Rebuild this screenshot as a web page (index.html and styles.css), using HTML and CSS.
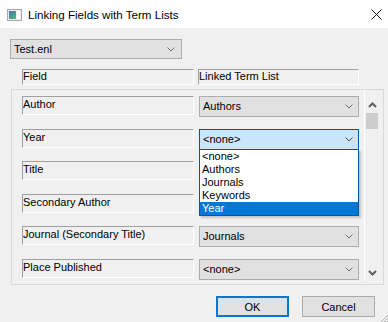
FILE: index.html
```html
<!DOCTYPE html>
<html lang="en">

<head>
  <meta charset="UTF-8">
  <meta name="viewport" content="width=device-width, initial-scale=1.0">
  <title>Linking Fields with Term Lists</title>

  <link rel="stylesheet" href="styles.css">

</head>

<body>

  <div class="dialog">
    <div class="titlebar">
      <svg class="app-icon" width="15" height="12" viewBox="0 0 15 12">
        <defs>
          <linearGradient id="appGrad" x1="0" y1="0" x2="0.6" y2="1">
            <stop offset="0" stop-color="#3f74b0" />
            <stop offset="1" stop-color="#57b07c" />
          </linearGradient>
        </defs>
        <rect x="0.5" y="0.5" width="14" height="11" fill="#ececec" stroke="#a8a8a8" />
        <rect x="2" y="2" width="7" height="8" fill="url(#appGrad)" />
        <rect x="9.5" y="2" width="3.5" height="8" fill="#fff" />
      </svg>
      <span class="title">Linking Fields with Term Lists</span>
      <svg class="close" width="11" height="11" viewBox="0 0 11 11">
        <path d="M0.5 0.5 L10.5 10.5 M10.5 0.5 L0.5 10.5" stroke="#111" stroke-width="1" fill="none" />
      </svg>
    </div>

    <div class="content">
      <div class="combo file-combo">
        <span>Test.enl</span>
        <svg class="chev" width="8" height="5" viewBox="0 0 8 5"><path d="M0.5 0.5 L4 4 L7.5 0.5" fill="none" stroke="#707070" /></svg>
      </div>

      <div class="headers">
        <div class="sunken head-field">Field</div>
        <div class="sunken head-list">Linked Term List</div>
      </div>

      <div class="panel">
        <div class="rows">
          <div class="row">
            <div class="sunken field">Author</div>
            <div class="combo term">
              <span>Authors</span>
              <svg class="chev" width="8" height="5" viewBox="0 0 8 5"><path d="M0.5 0.5 L4 4 L7.5 0.5" fill="none" stroke="#707070" /></svg>
            </div>
          </div>
          <div class="row">
            <div class="sunken field">Year</div>
            <div class="combo term open">
              <span>&lt;none&gt;</span>
              <svg class="chev" width="8" height="5" viewBox="0 0 8 5"><path d="M0.5 0.5 L4 4 L7.5 0.5" fill="none" stroke="#505050" /></svg>
            </div>
            <ul class="droplist">
              <li>&lt;none&gt;</li>
              <li>Authors</li>
              <li>Journals</li>
              <li>Keywords</li>
              <li class="selected">Year</li>
            </ul>
          </div>
          <div class="row">
            <div class="sunken field">Title</div>
          </div>
          <div class="row">
            <div class="sunken field">Secondary Author</div>
          </div>
          <div class="row">
            <div class="sunken field">Journal (Secondary Title)</div>
            <div class="combo term">
              <span>Journals</span>
              <svg class="chev" width="8" height="5" viewBox="0 0 8 5"><path d="M0.5 0.5 L4 4 L7.5 0.5" fill="none" stroke="#707070" /></svg>
            </div>
          </div>
          <div class="row">
            <div class="sunken field">Place Published</div>
            <div class="combo term">
              <span>&lt;none&gt;</span>
              <svg class="chev" width="8" height="5" viewBox="0 0 8 5"><path d="M0.5 0.5 L4 4 L7.5 0.5" fill="none" stroke="#707070" /></svg>
            </div>
          </div>
        </div>

        <div class="scrollbar">
          <div class="arrow">
            <svg width="9" height="6" viewBox="0 0 9 6"><path d="M1 5 L4.5 1.5 L8 5" fill="none" stroke="#606060" stroke-width="2" /></svg>
          </div>
          <div class="thumb"></div>
          <div class="track"></div>
          <div class="arrow">
            <svg width="9" height="6" viewBox="0 0 9 6"><path d="M1 1 L4.5 4.5 L8 1" fill="none" stroke="#606060" stroke-width="2" /></svg>
          </div>
        </div>
      </div>

      <div class="buttons">
        <button class="btn default">OK</button>
        <button class="btn">Cancel</button>
      </div>
    </div>

    <svg class="grip" width="8" height="8" viewBox="0 0 8 8">
      <path d="M8 1 L1 8 M8 4 L4 8 M8 7 L7 8" stroke="#b0b0b0" stroke-width="1" fill="none" />
    </svg>
  </div>

</body>

</html>
```

FILE: styles.css
```css
html,
body {
  margin: 0;
  padding: 0;
}

body {
  width: 388px;
  height: 322px;
  overflow: hidden;
  background: #f0f0f0;
  font-family: "Liberation Sans", Arial, sans-serif;
  font-size: 11px;
  line-height: 13px;
  color: #000;
}

.dialog {
  position: relative;
  width: 388px;
  height: 322px;
}

/* title bar */
.titlebar {
  display: flex;
  align-items: center;
  height: 28px;
  background: #fff;
  padding: 0 6px 0 7px;
  box-sizing: border-box;
}

.app-icon {
  display: block;
  margin-top: 1px;
}

.title {
  margin-left: 6px;
  font-size: 11.6px;
  flex: 1;
}

.close {
  display: block;
  margin-top: 1px;
}

.content {
  padding: 11px 0 0 10px;
}

/* combo boxes */
.combo {
  display: flex;
  align-items: center;
  justify-content: space-between;
  box-sizing: border-box;
  border: 1px solid #adadad;
  background: #e1e1e1;
  padding: 0 5px 0 3px;
}

.file-combo {
  width: 172px;
  height: 20px;
  padding-right: 6px;
}

.term {
  width: 160px;
  height: 21px;
}

.term.open {
  background: #cce4f7;
  border-color: #005499;
}

.chev {
  display: block;
}

/* sunken labels */
.sunken {
  box-sizing: border-box;
  border-top: 1px solid #a0a0a0;
  border-left: 1px solid #a0a0a0;
  border-right: 1px solid #fff;
  border-bottom: 1px solid #fff;
  white-space: nowrap;
  overflow: hidden;
}

.headers {
  display: flex;
  margin: 10px 0 0 12px;
}

.head-field {
  width: 172px;
  height: 16px;
}

.head-list {
  width: 161px;
  height: 16px;
  margin-left: 4px;
}

/* scrolling panel */
.panel {
  display: flex;
  box-sizing: border-box;
  width: 373px;
  height: 196px;
  margin: 4px 0 0 1px;
  border: 1px solid #dadada;
}

.rows {
  flex: 1;
  display: grid;
  grid-auto-rows: 32.6px;
  align-content: start;
  padding: 6px 0 0 10px;
}

.row {
  position: relative;
  display: flex;
  align-items: flex-start;
}

.field {
  width: 172px;
  height: 19px;
  padding-top: 1px;
  margin-right: 5px;
}

.droplist {
  position: absolute;
  top: 20px;
  left: 177px;
  width: 160px;
  margin: 0;
  padding: 0;
  list-style: none;
  box-sizing: border-box;
  border: 1px solid #005499;
  background: #fff;
  box-shadow: 2px 2px 2px rgba(0, 0, 0, 0.18);
  z-index: 2;
}

.droplist li {
  height: 13px;
  padding-left: 2px;
}

.droplist li.selected {
  background: #0078d7;
  color: #fff;
}

.scrollbar {
  display: flex;
  flex-direction: column;
  width: 16px;
  box-sizing: border-box;
  border-left: 1px solid #fff;
  margin: 0 3px 3px 0;
  padding-top: 7px;
}

.arrow {
  display: flex;
  align-items: center;
  justify-content: center;
  height: 16px;
}

.thumb {
  width: 12px;
  height: 16px;
  margin-left: 1px;
  background: #cdcdcd;
}

.track {
  flex: 1;
}

/* buttons */
.buttons {
  display: flex;
  justify-content: flex-end;
  gap: 13px;
  margin-top: 11px;
  padding-right: 13px;
}

.btn {
  width: 73px;
  height: 21px;
  box-sizing: border-box;
  border: 1px solid #adadad;
  background: #e1e1e1;
  font-family: "Liberation Sans", Arial, sans-serif;
  font-size: 11px;
  color: #000;
  padding: 0;
}

.btn.default {
  border: 2px solid #0078d7;
}

.grip {
  position: absolute;
  right: 0;
  bottom: 0;
}
```
